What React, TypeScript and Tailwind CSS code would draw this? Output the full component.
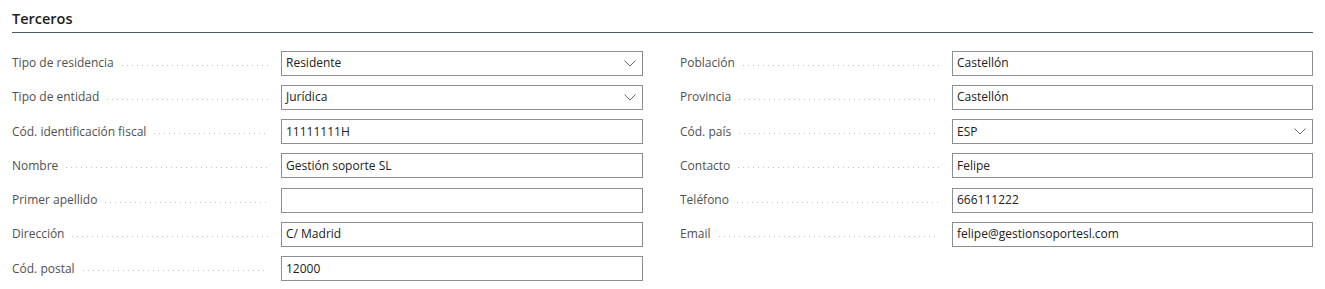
import React from "react";

type Field = { label: string; value: string; select?: boolean };

const left: Field[] = [
  { label: "Tipo de residencia", value: "Residente", select: true },
  { label: "Tipo de entidad", value: "Jurídica", select: true },
  { label: "Cód. identificación fiscal", value: "11111111H" },
  { label: "Nombre", value: "Gestión soporte SL" },
  { label: "Primer apellido", value: "" },
  { label: "Dirección", value: "C/ Madrid" },
  { label: "Cód. postal", value: "12000" },
];

const right: Field[] = [
  { label: "Población", value: "Castellón" },
  { label: "Provincia", value: "Castellón" },
  { label: "Cód. país", value: "ESP", select: true },
  { label: "Contacto", value: "Felipe" },
  { label: "Teléfono", value: "666111222" },
  { label: "Email", value: "felipe@gestionsoportesl.com" },
];

function Chevron() {
  return (
    <svg width="12" height="7" viewBox="0 0 12 7" className="shrink-0">
      <polyline points="0.5,0.5 6,6 11.5,0.5" fill="none" stroke="#6b6b6b" strokeWidth="1" />
    </svg>
  );
}

function Row({ f, labelW }: { f: Field; labelW: string }) {
  return (
    <div className="flex items-center h-[25px]">
      <div className={`flex items-center shrink-0 ${labelW}`}>
        <span className="text-[12px] text-[#505050] whitespace-nowrap leading-none">{f.label}</span>
        <span className="flex-1 ml-[8px] mr-[13px] h-px mt-[4px] bg-[repeating-linear-gradient(to_right,#c2c2c2_0_1px,transparent_1px_5px)]" />
      </div>
      <div className="flex-1 h-[25px] border border-[#8a8f96] bg-white flex items-center pl-[4px] pr-[6px]">
        <span className="flex-1 text-[12px] text-[#212121] leading-none whitespace-nowrap">{f.value}</span>
        {f.select && <Chevron />}
      </div>
    </div>
  );
}

export default function App() {
  return (
    <div className="w-[1325px] h-[289px] bg-white px-[12px] pt-[10px] font-['Open_Sans',sans-serif]">
      <div className="border-b border-[#4f5a6a] pb-[5px]">
        <h2 className="text-[14.5px] font-semibold text-[#212121] leading-[17px]">Terceros</h2>
      </div>
      <div className="grid grid-cols-[631px_633px] gap-x-[37px] mt-[17.5px]">
        <div className="flex flex-col gap-[9.3px]">
          {left.map((f) => (
            <Row key={f.label} f={f} labelW="w-[269px]" />
          ))}
        </div>
        <div className="flex flex-col gap-[9.3px]">
          {right.map((f) => (
            <Row key={f.label} f={f} labelW="w-[272px]" />
          ))}
        </div>
      </div>
    </div>
  );
}
